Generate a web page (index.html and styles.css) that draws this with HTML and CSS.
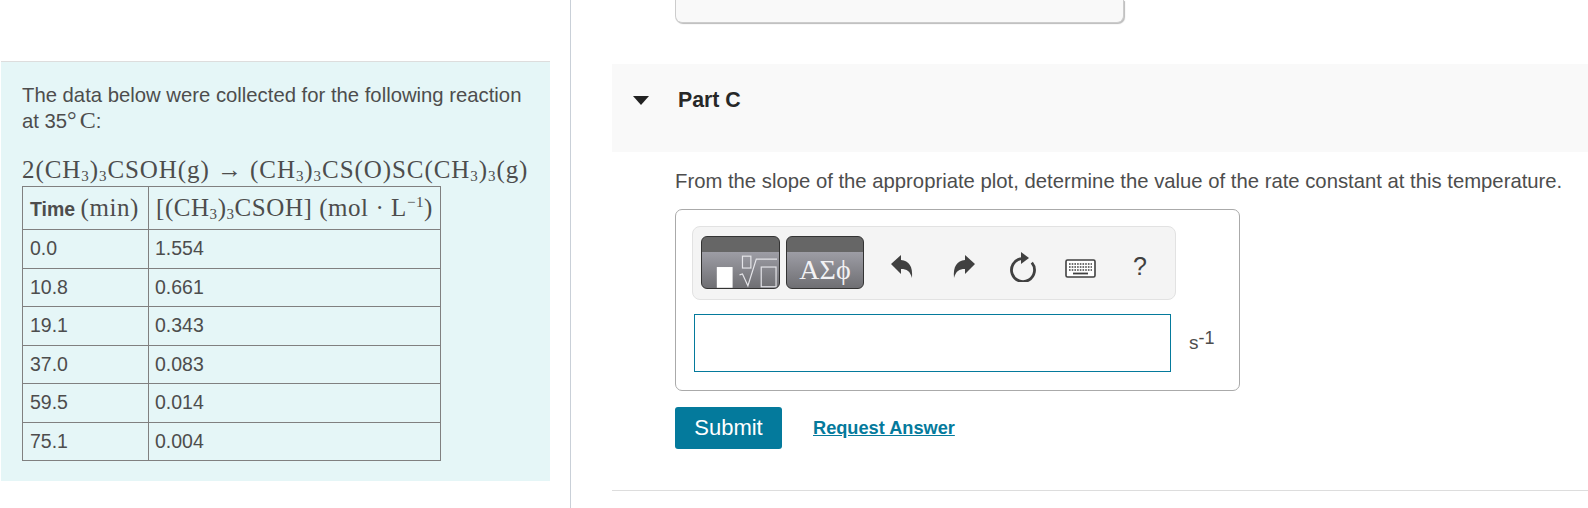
FILE: index.html
```html
<!DOCTYPE html>
<html lang="en">
<head>
<meta charset="utf-8">
<title>Part C</title>
<link rel="stylesheet" href="styles.css">
</head>
<body>
<div class="page">
  <aside class="left">
    <section class="panel">
      <p class="intro">The data below were collected for the following reaction<br>at 35<span class="m deg">°</span><span class="m c">C</span>:</p>
      <p class="eq m">2(CH<sub>3</sub>)<sub>3</sub>CSOH(g) → (CH<sub>3</sub>)<sub>3</sub>CS(O)SC(CH<sub>3</sub>)<sub>3</sub>(g)</p>
      <table class="data">
        <tr class="head"><th class="c1"><b>Time</b> <span class="m">(min)</span></th><th class="m">[(CH<sub>3</sub>)<sub>3</sub>CSOH] (mol · L<sup>−1</sup>)</th></tr>
        <tr><td>0.0</td><td>1.554</td></tr>
        <tr><td>10.8</td><td>0.661</td></tr>
        <tr><td>19.1</td><td>0.343</td></tr>
        <tr><td>37.0</td><td>0.083</td></tr>
        <tr><td>59.5</td><td>0.014</td></tr>
        <tr><td>75.1</td><td>0.004</td></tr>
      </table>
    </section>
  </aside>
  <main class="right">
    <div class="prev-wrap"><div class="prev"></div></div>
    <header class="part">
      <span class="tri"></span>
      <h2>Part C</h2>
    </header>
    <div class="body">
      <p class="q">From the slope of the appropriate plot, determine the value of the rate constant at this temperature.</p>
      <div class="box">
        <div class="tools">
          <button class="tpl">
            <svg width="78" height="37" viewBox="0 0 78 37"><rect x="15" y="16" width="16" height="21" fill="#fff"/><g fill="none" stroke="#e4e4e8" stroke-width="1.2"><rect x="41" y="5" width="8.5" height="12"/><path d="M38 24l3-1 5.500 12L55 8h21"/><rect x="60" y="16" width="15" height="20"/></g></svg>
          </button>
          <button class="tpl sym"><span>ΑΣϕ</span></button>
          <svg class="ic undo" width="22" height="24" viewBox="0 0 22 24"><path d="M0 9L10 0v5c8 1 12 6 11 18-2-7-5-9-11-9v5z" fill="#404040"/></svg>
          <svg class="ic redo" width="22" height="24" viewBox="0 0 22 24"><path d="M22 9L12 0v5C4 6 0 11 1 23c2-7 5-9 11-9v5z" fill="#404040"/></svg>
          <svg class="ic reload" width="28" height="30" viewBox="0 0 28 30"><path d="M22.800 10.600A11.500 11.500 0 1 1 12 6.700" fill="none" stroke="#404040" stroke-width="2.800"/><path d="M12 0l8 6-8 6z" fill="#404040"/></svg>
          <svg class="ic kbd" width="31" height="19" viewBox="0 0 31 19"><rect x="1" y="1" width="29" height="17" rx="1.5" fill="#fff" stroke="#404040" stroke-width="1.6"/><path d="M4 5h23M4 8h23M4 11h23" stroke="#404040" stroke-width="1.6" stroke-dasharray="1.6 1.1" fill="none"/><path d="M8 14.500h15" stroke="#404040" stroke-width="1.8"/></svg>
          <span class="help">?</span>
        </div>
        <div class="answer">
          <div class="input"></div>
          <span class="unit">s<sup>-1</sup></span>
        </div>
      </div>
      <div class="actions">
        <button class="submit">Submit</button>
        <a class="req" href="#">Request Answer</a>
      </div>
    </div>
    <hr class="rule">
  </main>
</div>
</body>
</html>
```
FILE: styles.css
```css
* { box-sizing: border-box; }
html, body { margin: 0; padding: 0; background: #fff; }
body { font-family: "Liberation Sans", Arial, sans-serif; color: #4d4d4d; height: 508px; overflow: hidden; }
.page { display: flex; height: 508px; }
.left { width: 571px; flex: none; border-right: 1px solid #c9d0d8; padding: 61px 20px 0 1px; }
.panel { height: 420px; background: #e5f6f7; border-top: 1px solid #ddd; padding: 21px 0 0 21px; }
.intro { margin: 0; font-size: 20.3px; line-height: 25px; }
.m { font-family: "Liberation Serif", "Times New Roman", serif; }
.deg { font-size: 24px; margin-right: 3px; }
.c { font-size: 24px; }
.eq { margin: 21px 0 0; font-size: 25px; letter-spacing: 0.93px; line-height: 30px; white-space: nowrap; }
.eq sub, .data sub { font-size: 15px; line-height: 0; vertical-align: -3px; }
.data sup { font-size: 15px; line-height: 0; vertical-align: 9px; }
.data { border-collapse: collapse; width: 419px; table-layout: fixed; margin-top: 1px; }
.data th, .data td { border: 1px solid #808080; padding: 0 0 0 7px; text-align: left; font-weight: 400; font-size: 19.5px; height: 38.5px; }
.data td + td { padding-left: 6px; }
.data th.c1 { width: 126px; }
.data th { height: 43px; white-space: nowrap; }
.data th.m, .data th .m { font-size: 25px; letter-spacing: 0.55px; font-family: "Liberation Serif", serif; }
.data b { font-size: 19.5px; font-family: "Liberation Sans", sans-serif; }
.right { flex: 1; padding-left: 41px; min-width: 0; }
.prev-wrap { height: 64px; padding-left: 63px; }
.prev { width: 449px; height: 23px; background: #f9f9f9; border: 1px solid #ccc; border-top: 0; border-radius: 0 0 7px 7px; box-shadow: 1px 1px 1px #bbb; }
.part { height: 88px; background: #f9f9f9; display: flex; align-items: center; padding-bottom: 16px; }
.tri { width: 0; height: 0; border-left: 8px solid transparent; border-right: 8px solid transparent; border-top: 9px solid #222; margin-left: 21px; }
.part h2 { margin: 0 0 0 29px; font-size: 21.3px; font-weight: 700; color: #282828; }
.body { padding-left: 63px; }
.q { margin: 17px 0 0; font-size: 20.3px; line-height: 25px; white-space: nowrap; }
.box { width: 565px; height: 182px; margin-top: 15px; border: 1px solid #aaa; border-radius: 7px; padding: 16px 16px 0; }
.tools { width: 484px; height: 74px; background: #f4f4f4; border: 1px solid #e2e2e2; border-radius: 8px; display: flex; align-items: center; padding-left: 8px; }
.tpl { width: 79px; height: 53px; padding: 0; margin-top: -2px; border: 1px solid #333; border-radius: 6px; background: linear-gradient(#666 0 15px, #9d9da5 15px, #6f6f73 100%); display: flex; align-items: flex-end; overflow: hidden; }
.tpl svg { display: block; }
.sym { margin-left: 6px; width: 78px; justify-content: center; color: #f2f2f4; font-family: "Liberation Serif", serif; font-size: 28px; line-height: 37px; }
.ic { display: block; flex: none; margin-top: 8px; }
.undo { margin-left: 27px; }
.redo { margin-left: 40px; }
.reload { margin-left: 34px; }
.kbd { margin-left: 28px; margin-top: 11px; }
.help { margin-left: 37px; margin-top: 6px; font-size: 25px; color: #404040; }
.answer { display: flex; margin-top: 14px; }
.input { width: 477px; height: 58px; border: 1px solid #047a9c; background: #fff; margin-left: 2px; }
.unit { margin-left: 18px; font-size: 19px; line-height: 58px; }
.unit sup { font-size: 18px; line-height: 0; vertical-align: 5px; }
.actions { display: flex; align-items: center; margin-top: 16px; }
.submit { width: 107px; height: 42px; border: 0; border-radius: 3px; background: #047a9c; color: #fff; font: 400 22px "Liberation Sans", sans-serif; padding: 0; }
.req { margin-left: 31px; font-size: 18.2px; font-weight: 700; color: #047a9c; }
.rule { margin: 41px 0 0; border: 0; border-top: 1px solid #ddd; }
```
